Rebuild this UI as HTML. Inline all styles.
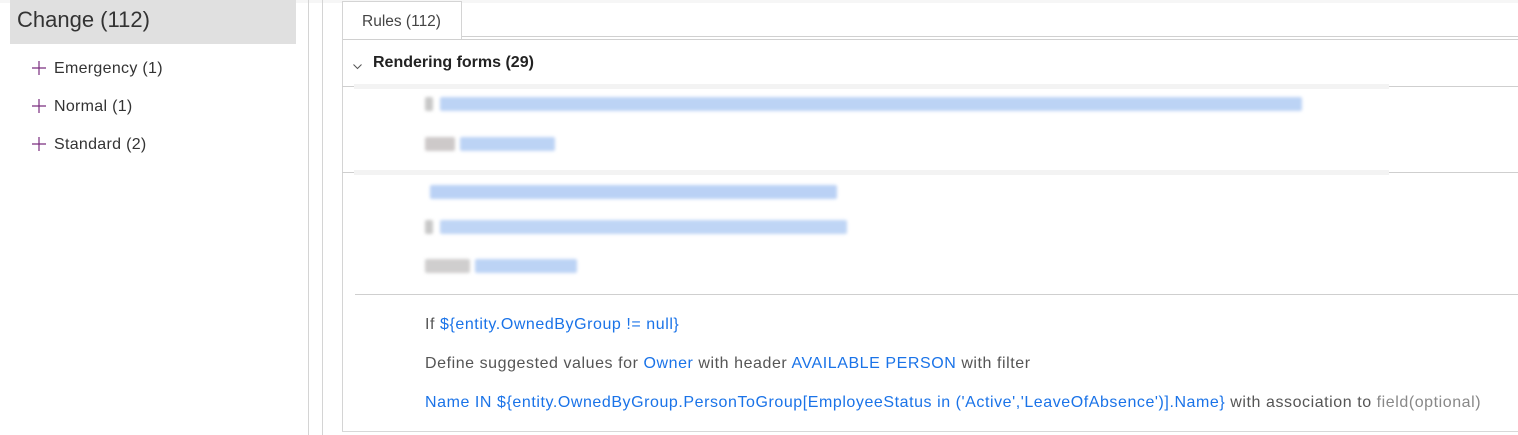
<!DOCTYPE html>
<html><head><meta charset="utf-8"><style>
*{margin:0;padding:0;box-sizing:border-box}
body{width:1518px;height:435px;overflow:hidden;background:#fff;font-family:"Liberation Sans",sans-serif;position:relative;color:#333}
.a{position:absolute}
.top{left:0;top:0;width:1518px;height:3px;background:#f6f6f6}
.side{left:10px;top:0;width:286px;height:44px;background:#e0e0e0}
.side span{position:absolute;left:7px;top:7px;font-size:22px;color:#333;white-space:nowrap}
.item{left:54px;font-size:16px;letter-spacing:0.3px;color:#333;white-space:nowrap}
.plus{position:absolute;left:32px}
.vl{width:1px;background:#d4d4d4}
.hl{height:1px;background:#cfcfcf}
.t{font-size:16px;letter-spacing:0.56px;white-space:nowrap;color:#555}
.b{color:#1a73e8}
.blur{position:absolute;height:14px;filter:blur(1.5px);border-radius:2px}
</style></head><body>
<div class="a top"></div>
<div class="a side"><span>Change (112)</span></div>
<svg class="plus" style="top:61px" width="14" height="14"><path d="M7 0V14M0 7H14" stroke="#7a2d7f" stroke-width="1.2"/></svg>
<svg class="plus" style="top:99px" width="14" height="14"><path d="M7 0V14M0 7H14" stroke="#7a2d7f" stroke-width="1.2"/></svg>
<svg class="plus" style="top:137px" width="14" height="14"><path d="M7 0V14M0 7H14" stroke="#7a2d7f" stroke-width="1.2"/></svg>
<div class="a item" style="top:60px">Emergency (1)</div>
<div class="a item" style="top:98px">Normal (1)</div>
<div class="a item" style="top:136px">Standard (2)</div>
<div class="a vl" style="left:308px;top:0;height:435px"></div>
<div class="a vl" style="left:322px;top:0;height:435px"></div>

<div class="a" style="left:342px;top:1px;width:120px;height:39px;border:1px solid #d4d4d4;border-bottom:none;background:#fff;font-size:15.5px;color:#444;padding:11px 0 0 19px">Rules (112)</div>
<div class="a hl" style="left:462px;top:36px;width:1056px;background:#d0d0d0"></div>
<div class="a hl" style="left:342px;top:39px;width:1176px;background:#d0d0d0"></div>
<div class="a vl" style="left:342px;top:39px;height:392px"></div>
<div class="a hl" style="left:342px;top:431px;width:1176px;background:#d8d8d8"></div>

<svg class="a" style="left:353px;top:64px" width="9" height="6"><path d="M0.5 0.5L4.5 4.5L8.5 0.5" fill="none" stroke="#555" stroke-width="1"/></svg>
<div class="a" style="left:373px;top:54px;font-size:16px;font-weight:bold;color:#222">Rendering forms (29)</div>
<div class="a hl" style="left:342px;top:86px;width:1176px"></div>
<div class="a" style="left:354px;top:84px;width:1035px;height:5px;background:#f3f3f3"></div>

<div class="blur" style="left:425px;top:97px;width:8px;background:#c8c8c8"></div>
<div class="blur" style="left:440px;top:97px;width:862px;background:#bcd3f5"></div>
<div class="blur" style="left:425px;top:137px;width:30px;background:#cdc9c9"></div>
<div class="blur" style="left:460px;top:137px;width:95px;background:#bcd3f5"></div>

<div class="a hl" style="left:342px;top:172px;width:1176px"></div>
<div class="a" style="left:354px;top:170px;width:1035px;height:5px;background:#f3f3f3"></div>
<div class="blur" style="left:430px;top:185px;width:407px;background:#bad1f5"></div>
<div class="blur" style="left:425px;top:220px;width:8px;background:#c8c8c8"></div>
<div class="blur" style="left:440px;top:220px;width:407px;background:#bfd5f5"></div>
<div class="blur" style="left:425px;top:259px;width:45px;background:#cfcece"></div>
<div class="blur" style="left:475px;top:259px;width:102px;background:#bcd3f5"></div>

<div class="a hl" style="left:355px;top:294px;width:1163px"></div>
<div class="a t" style="left:425px;top:316px">If <span class="b">${entity.OwnedByGroup != null}</span></div>
<div class="a t" style="left:425px;top:355px">Define suggested values for <span class="b">Owner</span> with header <span class="b">AVAILABLE PERSON</span> with filter</div>
<div class="a t" style="left:425px;top:394px"><span class="b">Name IN ${entity.OwnedByGroup.PersonToGroup[EmployeeStatus in ('Active','LeaveOfAbsence')].Name}</span> with association to <span style="color:#888">field(optional)</span></div>
</body></html>
